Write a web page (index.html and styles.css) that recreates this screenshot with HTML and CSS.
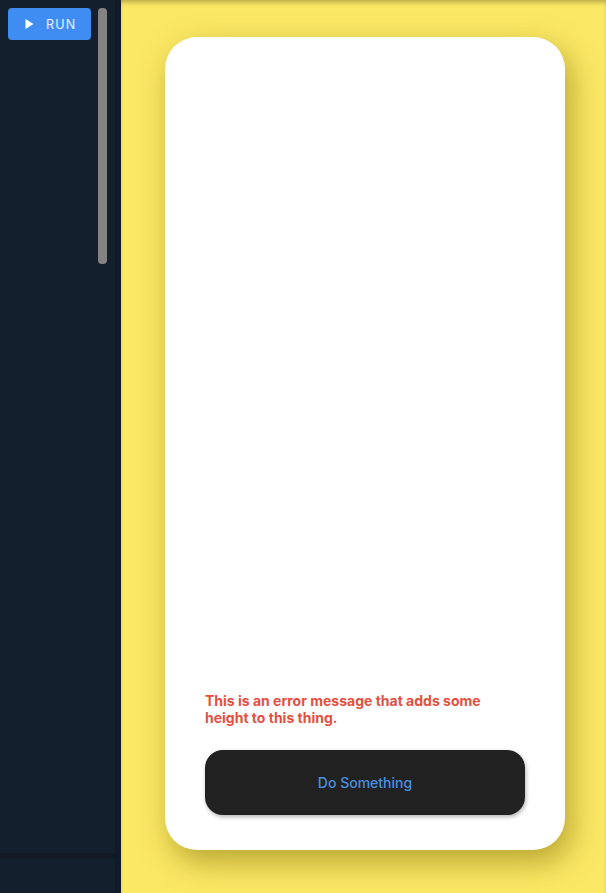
FILE: index.html
```html
<!DOCTYPE html>
<html>
<head>
<meta charset="utf-8">
<link rel="stylesheet" href="styles.css">
</head>
<body>
<div class="app">
  <aside class="sidebar">
    <div class="sidebar-main">
      <div class="toolbar">
        <button class="run-btn">
          <svg class="run-icon" width="9" height="10" viewBox="0 0 9 10"><path d="M0.5 0 L8.5 5 L0.5 10 Z" fill="#fff"/></svg>
          <span>RUN</span>
        </button>
        <div class="scrollbar"></div>
      </div>
      <div class="sidebar-bottom"></div>
    </div>
    <div class="sidebar-edge"></div>
  </aside>
  <main class="stage">
    <div class="card">
      <div class="card-body"></div>
      <p class="error">This is an error message that adds some height to this thing.</p>
      <button class="action">Do Something</button>
    </div>
  </main>
</div>
</body>
</html>
```
FILE: styles.css
```css
* { box-sizing: border-box; }
html, body { margin: 0; padding: 0; height: 100%; }
body { font-family: Inter, "Noto Sans", sans-serif; }
.app { display: flex; height: 893px; }
.sidebar { width: 121px; display: flex; background: #141f2d; }
.sidebar-main { flex: 1; display: flex; flex-direction: column; }
.sidebar-edge { width: 6px; background: #111a26; }
.toolbar { flex: 1; display: flex; align-items: flex-start; padding: 8px 0 0 8px; gap: 7px; }
.run-btn {
  width: 83px; height: 32px; border: 0; border-radius: 4px;
  background: #3f8cf3; color: #eaf2fe;
  display: flex; align-items: center; padding: 0 0 0 17px; gap: 12px;
  font-family: Inter, sans-serif; font-size: 12.5px; letter-spacing: 1.2px; font-weight: 400;
}
.run-icon { display: block; }
.scrollbar { width: 9px; height: 256px; background: #838383; border-radius: 4px; }
.sidebar-bottom { height: 40px; border-top: 5px solid #111a26; }
.stage {
  flex: 1; background: #fbe864; padding: 37px 41px 43px 44px;
  box-shadow: inset 0 4px 5px -2px rgba(0,0,0,0.3);
}
.card {
  height: 813px; width: 400px; background: #fff; border-radius: 32px;
  display: flex; flex-direction: column; padding: 0 40px 35px 40px;
  box-shadow: 6px 12px 30px rgba(120,100,0,0.5);
}
.card-body { flex: 1; }
.error {
  margin: 0 0 24px 0; color: #e4503f; font-weight: 700; font-size: 14px; line-height: 17px;
}
.action {
  height: 65px; border: 0; border-radius: 18px; background: #212121;
  color: #4a90e2; font-family: Inter, sans-serif; font-size: 14px; font-weight: 500;
  box-shadow: 1px 2px 4px rgba(0,0,0,0.3);
}
```
